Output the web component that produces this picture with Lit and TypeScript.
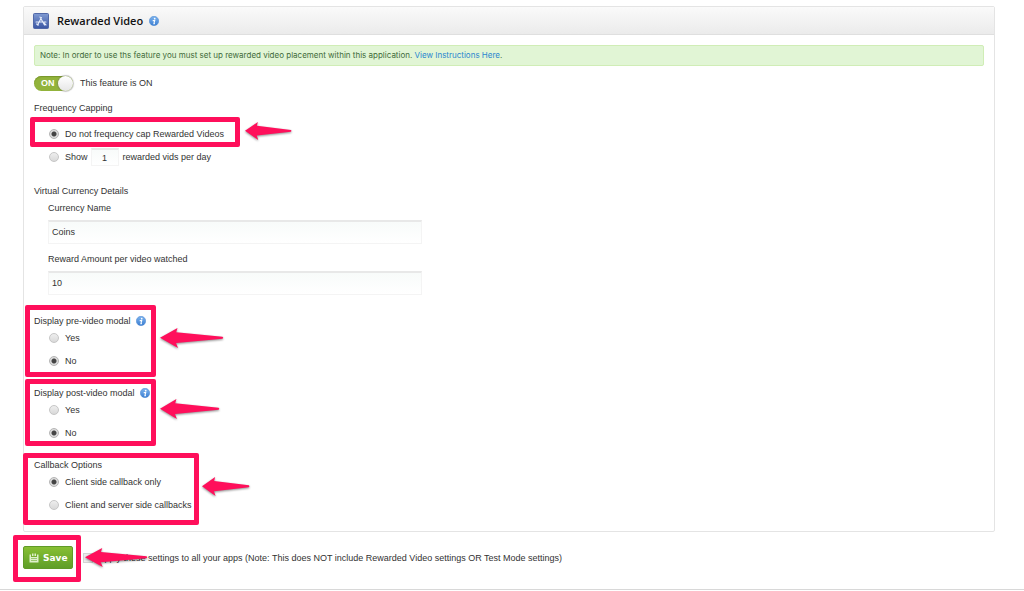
import { LitElement, html, css } from "lit";
import { customElement, property } from "lit/decorators.js";

@customElement("info-icon")
class InfoIcon extends LitElement {
  static styles = css`
    :host { display: inline-flex; }
    svg { display: block; width: 10px; height: 10px; }
  `;
  render() {
    return html`<svg viewBox="0 0 20 20" role="img" aria-label="More information">
      <defs>
        <linearGradient id="g" x1="0" y1="0" x2="0" y2="1">
          <stop offset="0" stop-color="#7db4ee" />
          <stop offset="1" stop-color="#3b7ed2" />
        </linearGradient>
      </defs>
      <circle cx="10" cy="10" r="9.4" fill="url(#g)" stroke="#4583cf" stroke-width="1" />
      <circle cx="11.4" cy="5.4" r="1.8" fill="#fff" />
      <path d="M7.4 9.2h4l-1.6 6h2" fill="none" stroke="#fff" stroke-width="2.2" />
    </svg>`;
  }
}

@customElement("callout-arrow")
class CalloutArrow extends LitElement {
  @property({ type: Number }) length = 60;
  @property({ type: Number }) thickness = 20;
  static styles = css`
    :host { display: block; filter: drop-shadow(0 1px 1px rgba(0, 0, 0, 0.45)); }
    svg { display: block; }
  `;
  render() {
    return html`<svg width=${this.length} height=${this.thickness} viewBox="0 0 64 20" preserveAspectRatio="none" aria-hidden="true">
      <path d="M0 9.8 L17.5 0 L16.2 4.2 L62.5 8.8 Q64 9.8 62.5 10.8 L16 15 L18 20 Z" fill="#ff0f5b" />
    </svg>`;
  }
}

@customElement("app-root")
class AppRoot extends LitElement {
  static styles = css`
    :host {
      display: block;
      min-height: 100vh;
      background: #fff;
      color: #333;
      font: 9px/16px "Liberation Sans", Arial, sans-serif;
    }
    * { box-sizing: border-box; }
    main { padding: 6px 29px 20px 23px; border-bottom: 1px solid #d8d8d8; }
    .panel { border: 1px solid #e4e4e4; border-radius: 2px; }
    .head {
      display: flex;
      align-items: center;
      height: 28px;
      padding: 0 9px;
      border-bottom: 1px solid #dfdfdf;
      background: linear-gradient(#fafafa, #ebebeb);
    }
    .head svg { width: 16px; height: 16px; }
    h1 {
      margin: 0 6px 0 8px;
      font: 600 11px/16px "Open Sans", "Noto Sans", sans-serif;
      color: #111;
    }
    .body { padding: 10px 10px 18px; }
    .note {
      margin: 0 0 9px;
      padding: 1px 5px;
      border: 1px solid #d0edb6;
      border-radius: 2px;
      background: #e1f5d5;
      color: #3f6b3a;
      font: 8px/17px Inter, "Liberation Sans", sans-serif;
    }
    a { color: #2a86cf; text-decoration: none; }
    .feature { display: flex; align-items: center; gap: 7px; height: 16px; margin-bottom: 9px; }
    .switch {
      display: flex;
      align-items: center;
      justify-content: space-between;
      width: 39px;
      height: 15px;
      padding: 0 0 0 7px;
      border: 0;
      border-radius: 8px;
      background: #92b33b;
      box-shadow: inset 0 1px 1px #78962c;
      color: #fff;
      font: bold 9px/15px "Liberation Sans", Arial, sans-serif;
    }
    .knob {
      width: 15px;
      height: 15px;
      border-radius: 50%;
      background: linear-gradient(#fff, #e6e6e6);
      box-shadow: 0 0 1px 1px rgba(110, 110, 110, 0.4);
    }
    fieldset { position: relative; width: fit-content; min-width: 0; margin: 0; padding: 0; border: 0; }
    fieldset.wide { width: 100%; }
    legend { padding: 0; display: block; }
    .options { display: grid; gap: 7px; padding: 1px 0 0 15px; }
    .options.spaced { padding-top: 10px; }
    .option { position: relative; display: flex; align-items: center; height: 16px; gap: 6px; white-space: nowrap; }
    .option label { display: flex; align-items: center; gap: 6px; }
    input[type="radio"] {
      appearance: none;
      width: 10px;
      height: 10px;
      margin: 0;
      border: 1px solid #c6c6c6;
      border-radius: 50%;
      background: linear-gradient(#eee, #d9d9d9);
    }
    input[type="radio"]:checked {
      border-color: #b4b4b4;
      background: radial-gradient(circle, #444 0 2px, #dcdcdc 3px);
    }
    input[type="text"] {
      border: 1px solid #f4f4f4;
      border-top: 2px solid #e8e8e8;
      border-radius: 0;
      background: linear-gradient(#f8fbfa, #fff);
      color: #333;
      font: 9px/16px "Liberation Sans", Arial, sans-serif;
      outline: 0;
    }
    input.count { width: 28px; height: 18px; margin: 0 -2px 0 -3px; padding: 0; text-align: center; }
    .fields { display: flex; flex-direction: column; padding: 1px 0 0 14px; }
    .fields input { width: 40%; height: 24px; margin: 4px 0 7px; padding: 0 3px 2px; }
    .fields input:last-child { margin-bottom: 0; }
    .gap { margin-top: 18px; }
    .next { margin-top: 16px; }
    .titled { display: flex; align-items: center; gap: 5px; }
    .mark { position: absolute; border: 5px solid #ff0f5b; border-radius: 2px; pointer-events: none; }
    callout-arrow { position: absolute; pointer-events: none; }
    .mark-cap { left: -19px; top: -9px; width: 210px; height: 30px; }
    .mark-cap callout-arrow { left: 210px; top: 0; }
    .mark-pre { left: -9px; top: -24px; width: 131px; height: 72px; }
    .mark-pre callout-arrow { left: 130px; top: 18px; }
    .mark-post { left: -9px; top: -22px; width: 131px; height: 67px; }
    .mark-post callout-arrow { left: 130px; top: 15px; }
    .mark-call { left: -11px; top: -20px; width: 176px; height: 72px; }
    .mark-call callout-arrow { left: 174px; top: 19px; }
    .mark-save { left: -10px; top: -11px; width: 68px; height: 47px; }
    .mark-save callout-arrow { left: 67px; top: 8px; }
    .footer { position: relative; display: flex; align-items: center; gap: 10px; margin-top: 14px; }
    .save {
      display: flex;
      align-items: center;
      gap: 4px;
      height: 23px;
      padding: 0 4px 0 5px;
      border: 1px solid #609a27;
      border-radius: 2px;
      background: linear-gradient(#87bf33, #5f9e28);
      color: #fff;
      font: bold 9px/16px "DejaVu Sans", Verdana, sans-serif;
    }
    .save svg { width: 10px; height: 10px; }
    .apply { display: flex; align-items: center; gap: 6px; }
    .apply input {
      appearance: none;
      width: 10px;
      height: 10px;
      margin: 0;
      border: 1px solid #d4d4d4;
      background: #ececec;
    }
  `;

  option(name: string, label: string, checked: boolean) {
    return html`<div class="option"><label><input type="radio" name=${name} ?checked=${checked} />${label}</label></div>`;
  }

  render() {
    return html`<main>
      <section class="panel">
        <header class="head">
          <svg viewBox="0 0 32 32" aria-hidden="true">
            <defs>
              <linearGradient id="store" x1="0" y1="0" x2="0" y2="1">
                <stop offset="0" stop-color="#7f9ad2" />
                <stop offset="1" stop-color="#3a55a3" />
              </linearGradient>
            </defs>
            <rect x="1" y="1" width="30" height="30" rx="2" fill="url(#store)" stroke="#5168a8" stroke-width="2" />
            <path d="M9 24L17 9M14 8l9 16M6 18h12M21 18h5M7 22l4 2M22 20l4 4" fill="none" stroke="#e5ecfa" stroke-width="2.2" stroke-linecap="round" />
          </svg>
          <h1>Rewarded Video</h1>
          <info-icon></info-icon>
        </header>
        <div class="body">
          <p class="note">Note: In order to use ths feature you must set up rewarded video placement within this application. <a href="#">View Instructions Here</a>.</p>
          <div class="feature">
            <button class="switch" type="button" role="switch" aria-checked="true" aria-labelledby="state"><span>ON</span><span class="knob"></span></button>
            <span id="state">This feature is ON</span>
          </div>
          <fieldset>
            <legend>Frequency Capping</legend>
            <div class="options spaced">
              <div class="option">
                <label><input type="radio" name="cap" checked />Do not frequency cap Rewarded Videos</label>
                <div class="mark mark-cap"><callout-arrow length="47" thickness="18"></callout-arrow></div>
              </div>
              <div class="option">
                <label><input type="radio" name="cap" />Show</label>
                <input class="count" type="text" value="1" aria-label="Rewarded videos per day" />
                <span>rewarded vids per day</span>
              </div>
            </div>
          </fieldset>
          <fieldset class="wide gap">
            <legend>Virtual Currency Details</legend>
            <div class="fields">
              <label for="currency">Currency Name</label>
              <input id="currency" type="text" value="Coins" />
              <label for="amount">Reward Amount per video watched</label>
              <input id="amount" type="text" value="10" />
            </div>
          </fieldset>
          <fieldset class="gap">
            <legend><span class="titled">Display pre-video modal <info-icon></info-icon></span></legend>
            <div class="options">${this.option("pre", "Yes", false)}${this.option("pre", "No", true)}</div>
            <div class="mark mark-pre"><callout-arrow length="64" thickness="20"></callout-arrow></div>
          </fieldset>
          <fieldset class="next">
            <legend><span class="titled">Display post-video modal <info-icon></info-icon></span></legend>
            <div class="options">${this.option("post", "Yes", false)}${this.option("post", "No", true)}</div>
            <div class="mark mark-post"><callout-arrow length="60" thickness="20"></callout-arrow></div>
          </fieldset>
          <fieldset class="next">
            <legend>Callback Options</legend>
            <div class="options">
              ${this.option("callback", "Client side callback only", true)}${this.option("callback", "Client and server side callbacks", false)}
            </div>
            <div class="mark mark-call"><callout-arrow length="48" thickness="19"></callout-arrow></div>
          </fieldset>
        </div>
      </section>
      <div class="footer">
        <button class="save" type="button">
          <svg viewBox="0 0 20 20" aria-hidden="true">
            <path d="M1 3h3v5h12V3h3v16H1z" fill="#dff0cb" />
            <path d="M6 1h2v5H6zM9 1h2v5H9zM12 1h2v5h-2z" fill="#dff0cb" />
            <path d="M4 11h12M4 15h12" stroke="#7fb54a" stroke-width="1.4" />
          </svg>
          Save
        </button>
        <label class="apply"><input type="checkbox" />Apply these settings to all your apps (Note: This does NOT include Rewarded Video settings OR Test Mode settings)</label>
        <div class="mark mark-save"><callout-arrow length="63" thickness="19"></callout-arrow></div>
      </div>
    </main>`;
  }
}
